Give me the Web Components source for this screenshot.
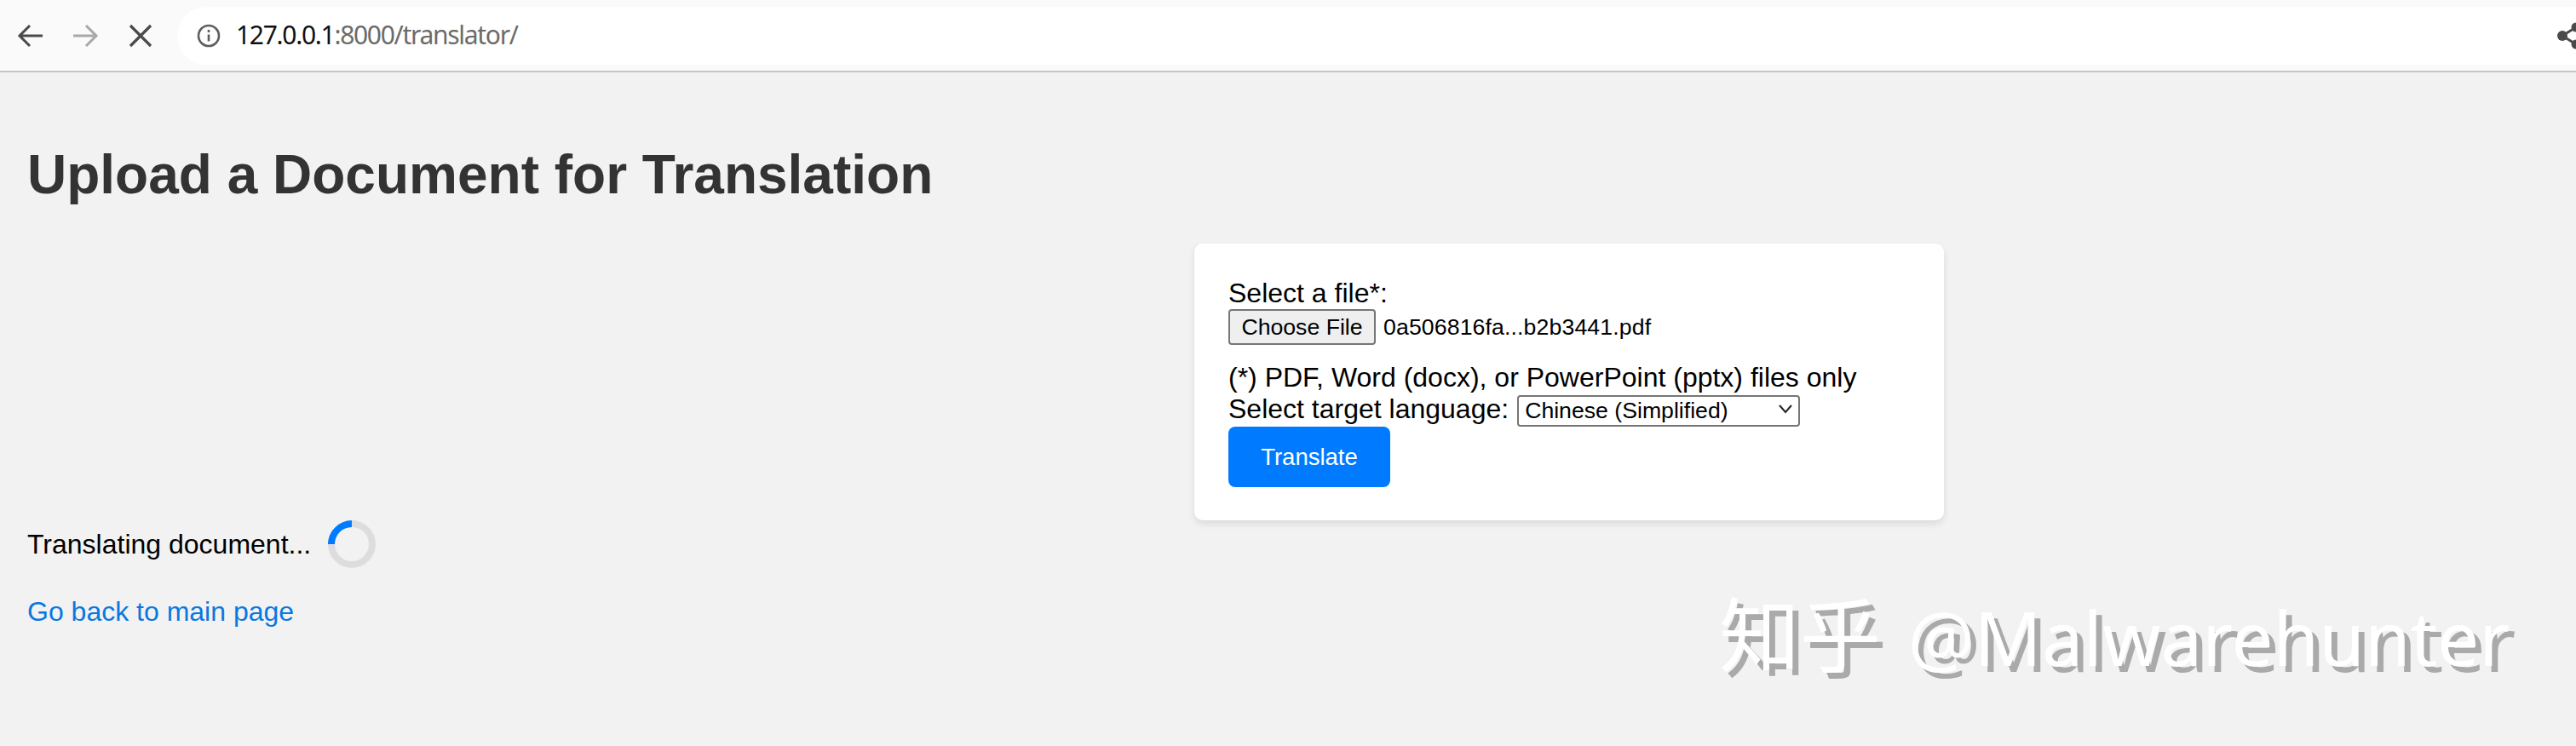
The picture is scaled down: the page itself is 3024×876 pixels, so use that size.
<!DOCTYPE html>
<html lang="en">
<head>
<meta charset="utf-8">
<title>Upload a Document for Translation</title>
<style>
  html, body { margin: 0; height: 100%; }
  body {
    background: #f2f2f2;
    font-family: "Liberation Sans", Arial, sans-serif;
    overflow: hidden;
    position: relative;
    height: 876px;
  }
</style>
</head>
<body>
<browser-bar url-host="127.0.0.1" url-rest=":8000/translator/"></browser-bar>
<translator-page>
  <h1 slot="title">Upload a Document for Translation</h1>
  <upload-card slot="card" file-name="0a506816fa...b2b3441.pdf" language="Chinese (Simplified)"></upload-card>
  <status-row slot="status">Translating document...</status-row>
  <a slot="link" href="#">Go back to main page</a>
</translator-page>
<water-mark><span>知乎</span> @Malwarehunter</water-mark>

<script>
class BrowserBar extends HTMLElement {
  constructor() {
    super();
    this.shadow = this.attachShadow({ mode: 'open' });
  }
  connectedCallback() {
    this.shadow.innerHTML = /*html*/`
      <style>
        :host {
          display: flex;
          align-items: center;
          height: 83px;
          background: #fafafa;
          border-bottom: 2px solid #c6c6c6;
          overflow: hidden;
        }
        .nav { display: flex; align-items: center; gap: 28px; padding-left: 18px; width: 190px; flex: none; box-sizing: border-box; }
        .nav svg { width: 36px; height: 36px; flex: none; display: block; }
        .pill {
          flex: 1;
          height: 68px;
          margin-right: -40px;
          background: #fff;
          border-radius: 34px;
          display: flex;
          align-items: center;
          padding-left: 23px;
          margin-left: 18px;
          gap: 18px;
          font: 30px "Noto Sans", sans-serif;
          letter-spacing: -1.3px;
          color: #6b6b6b;
          position: relative;
        }
        .pill .info { width: 28px; height: 28px; flex: none; }
        .pill span { position: relative; top: -1px; }
        .pill b { font-weight: 400; color: #111; }
        .share { position: absolute; left: 2791px; top: 12px; width: 50px; height: 44px; }
      </style>
      <div class="nav">
        <svg viewBox="0 0 36 36" fill="none" stroke="#4a4a4a" stroke-width="3"><path d="M32 18H6M17 6 5 18l12 12"/></svg>
        <svg viewBox="0 0 36 36" fill="none" stroke="#a8a8a8" stroke-width="3"><path d="M4 18h26M19 6l12 12-12 12"/></svg>
        <svg viewBox="0 0 36 36" fill="none" stroke="#4a4a4a" stroke-width="3.2"><path d="M7 6l24 24M31 6 7 30"/></svg>
      </div>
      <div class="pill">
        <svg class="info" viewBox="0 0 28 28" fill="none" stroke="#5f5f5f" stroke-width="2.6">
          <circle cx="14" cy="14" r="12"/><path d="M14 12.5v8M14 7v3"/>
        </svg>
        <span><b>${this.getAttribute('url-host')}</b>${this.getAttribute('url-rest')}</span>
        <svg class="share" viewBox="0 0 50 44" fill="#4a4a4a" stroke="#4a4a4a" stroke-width="3">
          <path d="M9 22 25 12M9 22l16 10"/>
          <circle cx="9" cy="22" r="6" stroke="none"/><circle cx="25" cy="12" r="5.5" stroke="none"/><circle cx="25" cy="32" r="5.5" stroke="none"/>
        </svg>
      </div>
    `;
  }
}

class TranslatorPage extends HTMLElement {
  constructor() {
    super();
    this.shadow = this.attachShadow({ mode: 'open' });
  }
  connectedCallback() {
    this.shadow.innerHTML = /*html*/`
      <style>
        :host { display: block; padding: 83px 32px 0; }
        ::slotted(h1) {
          margin: 0 0 44px;
          font-size: 64px;
          line-height: 74px;
          font-weight: 700;
          color: #333;
        }
        .card-wrap { padding-left: 1370px; }
        ::slotted(a) {
          display: inline-block;
          margin-top: 33px;
          font-size: 32px;
          line-height: 37px;
          color: #0a78e0;
          text-decoration: none;
        }
      </style>
      <slot name="title"></slot>
      <div class="card-wrap"><slot name="card"></slot></div>
      <slot name="status"></slot>
      <slot name="link"></slot>
    `;
  }
}

class UploadCard extends HTMLElement {
  constructor() {
    super();
    this.shadow = this.attachShadow({ mode: 'open' });
  }
  connectedCallback() {
    this.shadow.innerHTML = /*html*/`
      <style>
        :host {
          display: block;
          width: 880px;
          box-sizing: border-box;
          padding: 40px 40px 39px;
          background: #fff;
          border-radius: 10px;
          box-shadow: 0 4px 8px rgba(0,0,0,.1);
          font-size: 32px;
          line-height: 37px;
          color: #000;
        }
        .file { display: flex; align-items: center; gap: 9px; font-size: 26.67px; height: 42px; margin-bottom: 20px; letter-spacing: .12px; }
        .choose {
          height: 42px;
          width: 173px;
          box-sizing: border-box;
          padding: 0;
          border: 2px solid #767676;
          border-radius: 4px;
          background: #efefef;
          font: inherit;
          color: #000;
        }
        .lang { display: flex; align-items: center; gap: 10px; height: 37px; }
        .select-wrap { position: relative; width: 332px; height: 37px; }
        select {
          appearance: none;
          width: 100%;
          height: 100%;
          box-sizing: border-box;
          padding: 0 0 0 7px;
          border: 2px solid #767676;
          border-radius: 4px;
          background: #fff;
          font: 26.67px "Liberation Sans", Arial, sans-serif;
          color: #000;
        }
        .chev { position: absolute; right: 8px; top: 12px; width: 18px; height: 12px; pointer-events: none; }
        .go {
          display: block;
          width: 190px;
          height: 71px;
          margin-top: 2px;
          border: 0;
          border-radius: 8px;
          background: #007bff;
          color: #fff;
          font: 27.5px "Liberation Sans", Arial, sans-serif;
        }
      </style>
      <div>Select a file*:</div>
      <div class="file"><button class="choose">Choose File</button><span>${this.getAttribute('file-name')}</span></div>
      <div>(*) PDF, Word (docx), or PowerPoint (pptx) files only</div>
      <div class="lang">
        <span>Select target language:</span>
        <span class="select-wrap">
          <select><option>${this.getAttribute('language')}</option></select>
          <svg class="chev" viewBox="0 0 18 12" fill="none" stroke="#222" stroke-width="2"><path d="M2 2l7 8 7-8"/></svg>
        </span>
      </div>
      <button class="go">Translate</button>
    `;
  }
}

class StatusRow extends HTMLElement {
  constructor() {
    super();
    this.shadow = this.attachShadow({ mode: 'open' });
  }
  connectedCallback() {
    this.shadow.innerHTML = /*html*/`
      <style>
        :host {
          display: flex;
          align-items: center;
          gap: 20px;
          font-size: 32px;
          line-height: 37px;
          color: #000;
        }
        .spin {
          width: 56px;
          height: 56px;
          box-sizing: border-box;
          border: 8px solid #ddd;
          border-top-color: #007bff;
          border-radius: 50%;
          transform: rotate(-45deg);
        }
      </style>
      <slot></slot><div class="spin"></div>
    `;
  }
}

class WaterMark extends HTMLElement {
  constructor() {
    super();
    this.shadow = this.attachShadow({ mode: 'open' });
  }
  connectedCallback() {
    this.shadow.innerHTML = /*html*/`
      <style>
        :host {
          position: absolute;
          left: 2018px;
          top: 690px;
          font: 87px/110px "Noto Sans", "Noto Sans CJK SC", sans-serif;
          word-spacing: 9px;
          color: #fff;
          text-shadow: 7px 7px 0 #aaa;
          white-space: nowrap;
        }
        ::slotted(span) { font-size: 95px; }
      </style>
      <slot></slot>
    `;
  }
}

customElements.define('browser-bar', BrowserBar);
customElements.define('translator-page', TranslatorPage);
customElements.define('upload-card', UploadCard);
customElements.define('status-row', StatusRow);
customElements.define('water-mark', WaterMark);
</script>
</body>
</html>
